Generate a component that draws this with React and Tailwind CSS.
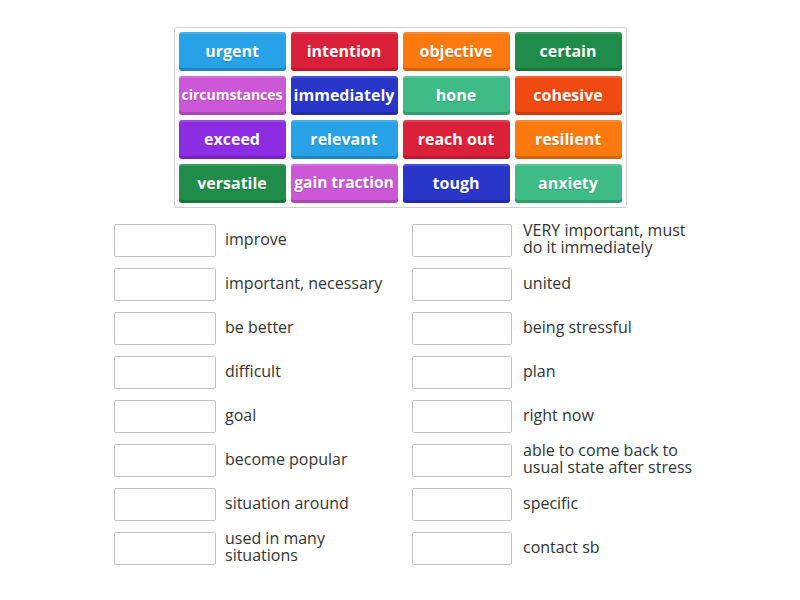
import React from "react";

const tiles = [
  { t: "urgent", c: "bg-[#27a2e7]" },
  { t: "intention", c: "bg-[#db2139]" },
  { t: "objective", c: "bg-[#fb790f]" },
  { t: "certain", c: "bg-[#1f8c4a]" },
  { t: "circumstances", c: "bg-[#cc58d8]", s: "text-[14px]" },
  { t: "immediately", c: "bg-[#2a36c9]" },
  { t: "hone", c: "bg-[#3ebb87]" },
  { t: "cohesive", c: "bg-[#f04a10]" },
  { t: "exceed", c: "bg-[#8c2de3]" },
  { t: "relevant", c: "bg-[#27a2e7]" },
  { t: "reach out", c: "bg-[#db2139]" },
  { t: "resilient", c: "bg-[#fb790f]" },
  { t: "versatile", c: "bg-[#1f8c4a]" },
  { t: "gain traction", c: "bg-[#cc58d8]", s: "text-[15.5px]" },
  { t: "tough", c: "bg-[#2a36c9]" },
  { t: "anxiety", c: "bg-[#3ebb87]" },
];

const left = [
  "improve",
  "important, necessary",
  "be better",
  "difficult",
  "goal",
  "become popular",
  "situation around",
  "used in many situations",
];
const right = [
  "VERY important, must do it immediately",
  "united",
  "being stressful",
  "plan",
  "right now",
  "able to come back to usual state after stress",
  "specific",
  "contact sb",
];

function Row({ text, boxW, gap }) {
  return (
    <div className="flex items-center h-[33px]">
      <div className={`${boxW} h-[33px] border border-[#c2c2c2] rounded-[2px] bg-white shrink-0`} />
      <div className={`${gap} w-[172px] text-[16px] leading-[17px] text-[#333333] mb-[3px]`}>{text}</div>
    </div>
  );
}

export default function App() {
  return (
    <div className="w-[800px] h-[600px] bg-white overflow-hidden" style={{ fontFamily: "'Open Sans', sans-serif" }}>
      <div className="pt-[27px] flex justify-center">
        <div className="border border-[#cfcfcf] rounded-[3px] p-[4px] grid grid-cols-[repeat(4,107px)] gap-[5px] bg-white">
          {tiles.map((x) => (
            <div
              key={x.t}
              className={`${x.c} h-[39px] rounded-[3px] flex items-center justify-center text-white font-bold ${x.s || "text-[16px]"} whitespace-nowrap shadow-[inset_0_-3px_0_rgba(0,0,0,0.17),inset_0_2px_0_rgba(255,255,255,0.14)] [text-shadow:0_1px_1px_rgba(0,0,0,0.15)] pb-[2px]`}
            >
              {x.t}
            </div>
          ))}
        </div>
      </div>
      <div className="mt-[16px] pl-[114px] flex">
        <div className="w-[298px] flex flex-col gap-[11px]">
          {left.map((t) => (
            <Row key={t} text={t} boxW="w-[102px]" gap="ml-[9px]" />
          ))}
        </div>
        <div className="flex flex-col gap-[11px]">
          {right.map((t) => (
            <Row key={t} text={t} boxW="w-[100px]" gap="ml-[11px]" />
          ))}
        </div>
      </div>
    </div>
  );
}
